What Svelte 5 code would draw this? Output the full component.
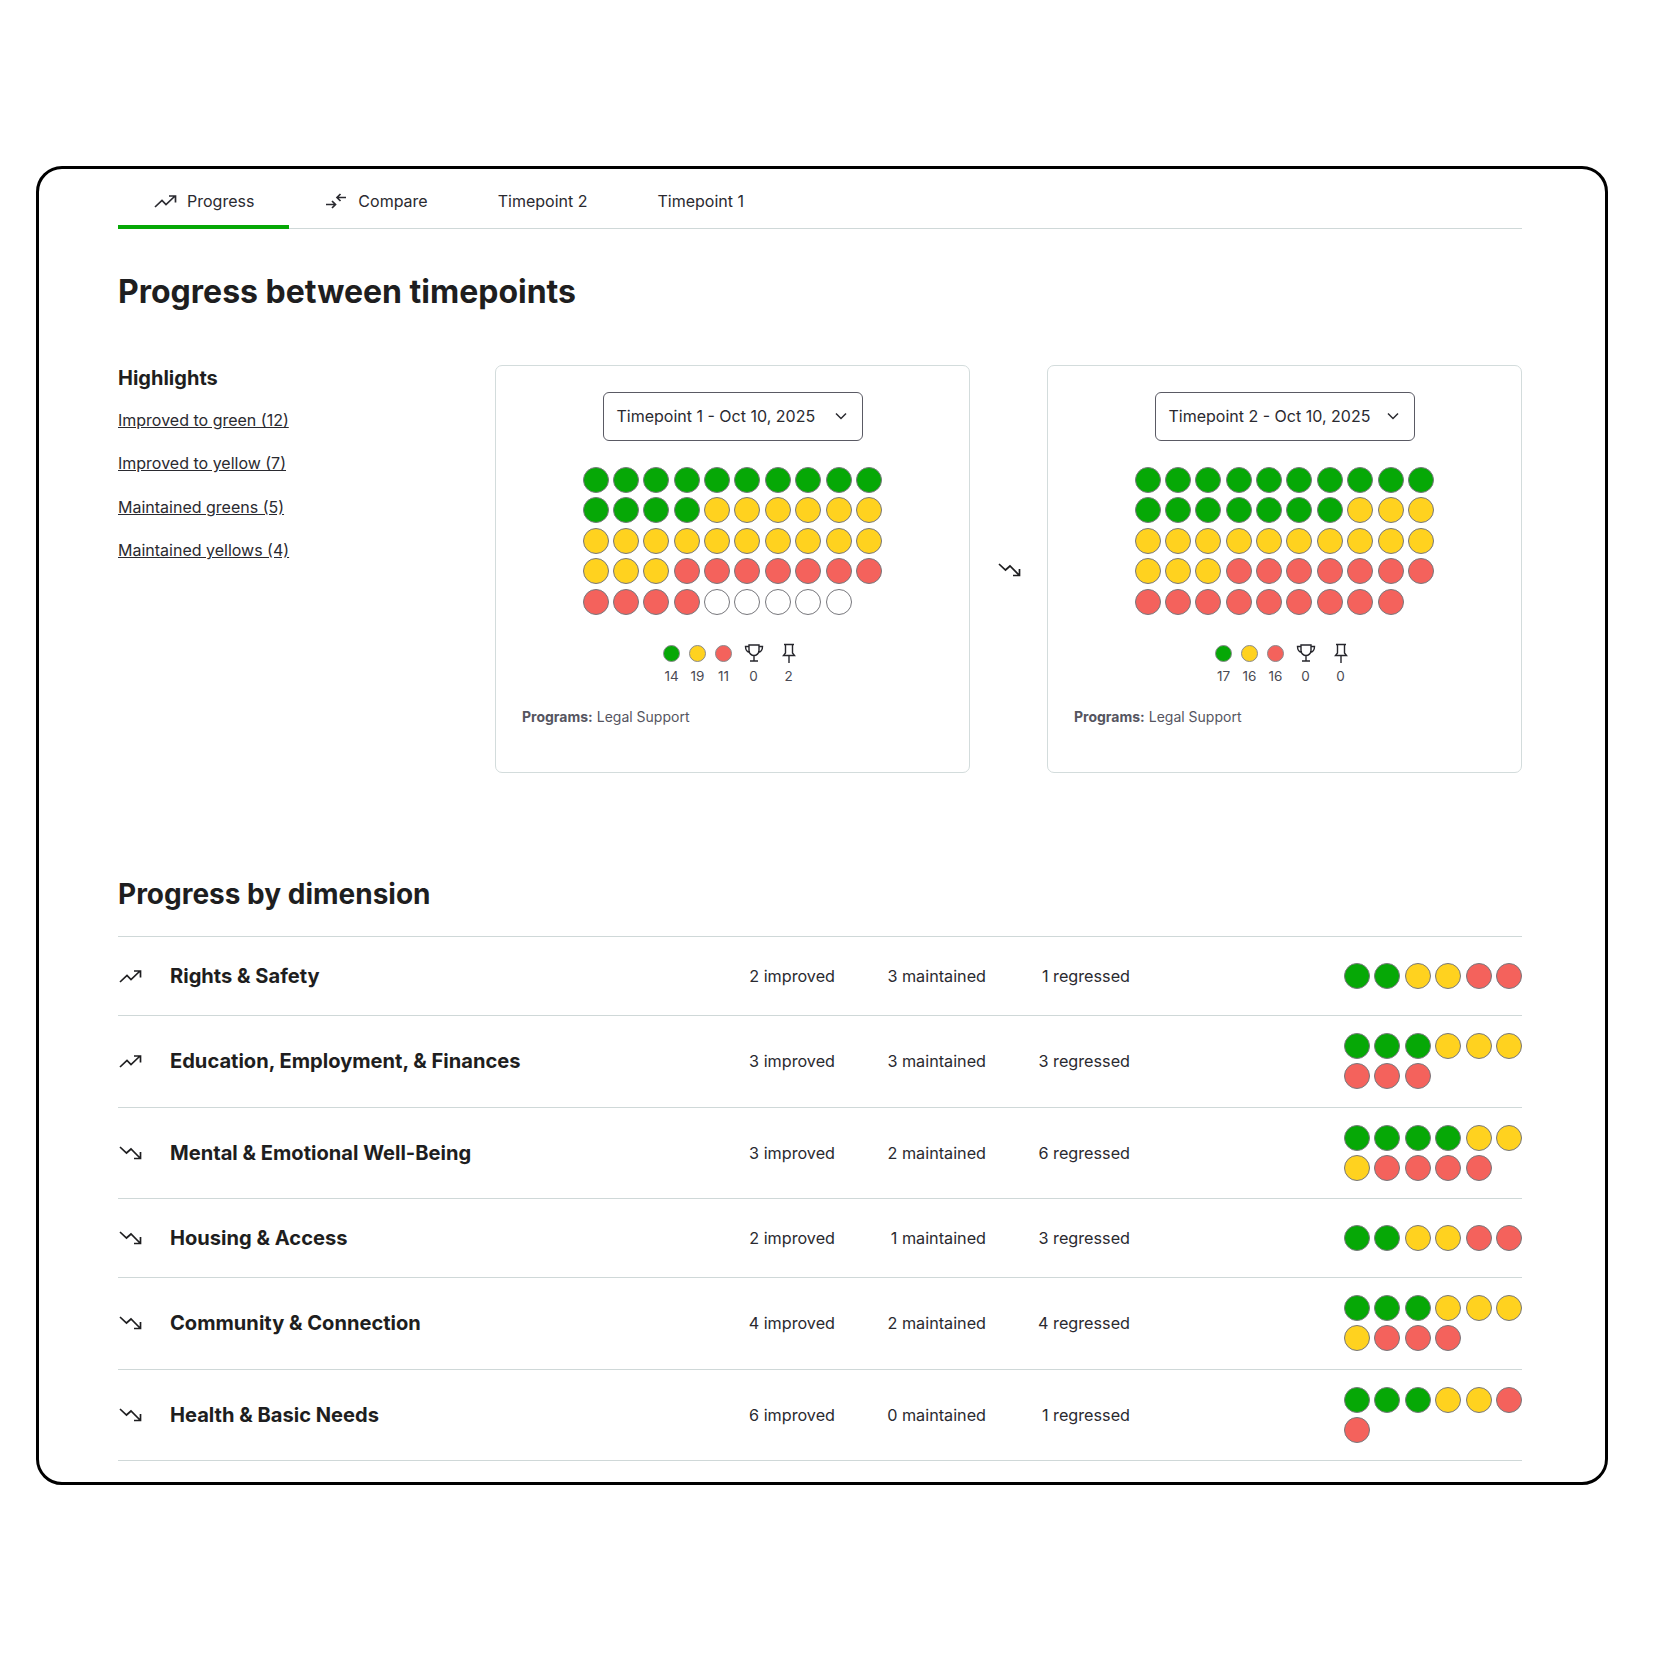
<script lang="ts">
  const g = "g", y = "y", r = "r", e = "e";

  function expand(counts: [string, number][]): string[] {
    return counts.flatMap(([c, n]) => Array(n).fill(c));
  }

  const tabs = ["Progress", "Compare", "Timepoint 2", "Timepoint 1"];
  const highlights = [
    "Improved to green (12)",
    "Improved to yellow (7)",
    "Maintained greens (5)",
    "Maintained yellows (4)",
  ];

  const cards = [
    {
      label: "Timepoint 1 - Oct 10, 2025",
      dots: expand([[g, 14], [y, 19], [r, 11], [e, 5]]),
      counts: [14, 19, 11, 0, 2],
    },
    {
      label: "Timepoint 2 - Oct 10, 2025",
      dots: expand([[g, 17], [y, 16], [r, 16]]),
      counts: [17, 16, 16, 0, 0],
    },
  ];

  const dimensions = [
    { name: "Rights & Safety", up: true, imp: 2, main: 3, reg: 1, dots: expand([[g, 2], [y, 2], [r, 2]]) },
    { name: "Education, Employment, & Finances", up: true, imp: 3, main: 3, reg: 3, dots: expand([[g, 3], [y, 3], [r, 3]]) },
    { name: "Mental & Emotional Well-Being", up: false, imp: 3, main: 2, reg: 6, dots: expand([[g, 4], [y, 3], [r, 4]]) },
    { name: "Housing & Access", up: false, imp: 2, main: 1, reg: 3, dots: expand([[g, 2], [y, 2], [r, 2]]) },
    { name: "Community & Connection", up: false, imp: 4, main: 2, reg: 4, dots: expand([[g, 3], [y, 4], [r, 3]]) },
    { name: "Health & Basic Needs", up: false, imp: 6, main: 0, reg: 1, dots: expand([[g, 3], [y, 2], [r, 2]]) },
  ];
</script>

{#snippet trend(up: boolean)}
  <svg class="trend" viewBox="0 0 24 16" fill="none" stroke="currentColor" stroke-width="1.7">
    {#if up}
      <path d="M2 14 L9 7.5 L13 11.5 L22 3 M16 3 H22.5 V9.5" />
    {:else}
      <path d="M2 2 L8.5 8 L13 4 L22 13 M22.5 7 V13.5 H16" />
    {/if}
  </svg>
{/snippet}

<div class="frame">
  <nav class="tabs">
    {#each tabs as t, i}
      <div class="tab" class:active={i === 0}>
        {#if i === 0}
          {@render trend(true)}
        {:else if i === 1}
          <svg class="trend" viewBox="0 0 24 16" fill="none" stroke="currentColor" stroke-width="1.7">
            <path d="M2 11.5 H11.5 M8 8 L11.5 11.5 L8 15 M22 4.5 H13 M16.5 1 L13 4.5 L16.5 8" />
          </svg>
        {/if}
        <span>{t}</span>
      </div>
    {/each}
  </nav>

  <h1>Progress between timepoints</h1>

  <section class="compare">
    <div class="highlights">
      <h3>Highlights</h3>
      {#each highlights as h}
        <a href="#top">{h}</a>
      {/each}
    </div>

    {#each cards as c, i}
      {#if i === 1}
        <div class="between">{@render trend(false)}</div>
      {/if}
      <div class="card">
        <div class="select">
          <span>{c.label}</span>
          <svg viewBox="0 0 12 8" width="12" height="8" fill="none" stroke="currentColor" stroke-width="1.5">
            <path d="M1 1.5 L6 6.5 L11 1.5" />
          </svg>
        </div>
        <div class="grid">
          {#each c.dots as d}
            <span class="dot {d}"></span>
          {/each}
        </div>
        <div class="legend">
          <div class="col"><span class="mini g"></span><small>{c.counts[0]}</small></div>
          <div class="col"><span class="mini y"></span><small>{c.counts[1]}</small></div>
          <div class="col"><span class="mini r"></span><small>{c.counts[2]}</small></div>
          <div class="col wide">
            <svg viewBox="0 0 20 20" width="20" height="20" fill="none" stroke="#26262c" stroke-width="1.4">
              <path d="M5 2 H15 V7.5 C15 10.5 12.5 12.5 10 12.5 C7.5 12.5 5 10.5 5 7.5 Z M5 3.5 H1.5 C1.5 7 3 9 6 9.5 M15 3.5 H18.5 C18.5 7 17 9 14 9.5 M10 12.5 V17.5 M6 18 H14" />
            </svg>
            <small>{c.counts[3]}</small>
          </div>
          <div class="col wider">
            <svg viewBox="0 0 20 20" width="20" height="20" fill="none" stroke="#26262c" stroke-width="1.4">
              <path d="M5 1.5 H15 M6.5 1.5 V10 L4.5 12.5 H15.5 L13.5 10 V1.5 M10 12.5 V20" />
            </svg>
            <small>{c.counts[4]}</small>
          </div>
        </div>
        <p class="programs"><b>Programs:</b> Legal Support</p>
      </div>
    {/each}
  </section>

  <h2>Progress by dimension</h2>

  <div class="rows">
    {#each dimensions as d}
      <div class="row">
        {@render trend(d.up)}
        <span class="name">{d.name}</span>
        <span class="stat">{d.imp} improved</span>
        <span class="stat">{d.main} maintained</span>
        <span class="stat">{d.reg} regressed</span>
        <div class="dots">
          {#each d.dots as x}
            <span class="dot {x}"></span>
          {/each}
        </div>
      </div>
    {/each}
  </div>
</div>

<style>
  :global(body) {
    margin: 0;
    background: #fff;
  }

  .frame {
    box-sizing: border-box;
    width: 1572px;
    height: 1319px;
    margin: 166px 0 0 36px;
    padding: 0 83px 0 79px;
    border: 3px solid #000;
    border-radius: 26px;
    font-family: Inter, "Open Sans", sans-serif;
    color: #1e1e20;
  }

  .tabs {
    display: flex;
    height: 59px;
    border-bottom: 1px solid #cfd8d8;
  }

  .tab {
    display: flex;
    align-items: center;
    gap: 10px;
    box-sizing: border-box;
    height: 60px;
    margin-bottom: -1px;
    padding: 8px 35px 0;
    border-bottom: 4px solid transparent;
    font-size: 16px;
    color: #2a2a30;
  }

  .tab.active {
    border-bottom-color: #06a806;
  }

  h1 {
    margin: 44px 0 0;
    font-size: 32px;
    line-height: 38px;
    font-weight: 700;
  }

  .compare {
    display: grid;
    grid-template-columns: 377px 475px 77px 475px;
    margin-top: 54px;
  }

  .highlights {
    display: flex;
    flex-direction: column;
    align-items: flex-start;
  }

  h3 {
    margin: 0 0 19px;
    padding-top: 1px;
    font-size: 20px;
    line-height: 24px;
    font-weight: 700;
  }

  .highlights a {
    color: #2a2a30;
    font-size: 16px;
    line-height: 22px;
    margin-bottom: 21.3px;
  }

  .card {
    box-sizing: border-box;
    height: 408px;
    padding: 26px 26px 0;
    border: 1px solid #d3dcdc;
    border-radius: 7px;
    display: flex;
    flex-direction: column;
    align-items: center;
  }

  .select {
    box-sizing: border-box;
    width: 260px;
    height: 49px;
    padding: 0 15px 2px 13px;
    border: 1px solid #5a5a64;
    border-radius: 6px;
    display: flex;
    align-items: center;
    justify-content: space-between;
    font-size: 16px;
    color: #2a2a30;
  }

  .grid {
    width: 300px;
    margin-top: 25.5px;
    display: flex;
    flex-wrap: wrap;
    gap: 4.5px 4.4px;
    align-content: flex-start;
  }

  .dot {
    box-sizing: border-box;
    width: 26px;
    height: 26px;
    border-radius: 50%;
    border: 1px solid #77777c;
  }

  .g { background: #06a806; }
  .y { background: #ffd21f; }
  .r { background: #f4625c; }
  .e { background: #fff; }

  .legend {
    display: flex;
    margin-top: 28.5px;
  }

  .col {
    width: 26px;
    display: flex;
    flex-direction: column;
    align-items: center;
  }

  .col.wide { width: 34px; }
  .col.wider { width: 36px; }

  .mini {
    box-sizing: border-box;
    width: 17px;
    height: 17px;
    margin: 1.5px 0;
    border-radius: 50%;
    border: 1px solid #8a8a8e;
  }

  small {
    margin-top: 4px;
    font-size: 13.5px;
    line-height: 18px;
    color: #4a4a54;
  }

  .programs {
    align-self: flex-start;
    margin: 23px 0 0;
    font-size: 14px;
    line-height: 18px;
    color: #55555f;
  }

  .between {
    display: flex;
    align-items: center;
    justify-content: center;
    height: 409px;
  }

  .trend {
    width: 24px;
    height: 16px;
    flex: none;
  }

  h2 {
    margin: 102px 0 0;
    font-size: 28px;
    line-height: 36px;
    font-weight: 700;
  }

  .rows {
    margin-top: 24px;
    border-top: 1px solid #cfd8d8;
  }

  .row {
    box-sizing: border-box;
    min-height: 79px;
    padding: 17.25px 0;
    border-bottom: 1px solid #cfd8d8;
    display: grid;
    grid-template-columns: 52px 515px 150px 151px 144px 392px;
    align-items: center;
  }

  .name {
    font-size: 20.1px;
    font-weight: 700;
  }

  .stat {
    text-align: right;
    font-size: 16.2px;
    color: #2a2a30;
  }

  .dots {
    justify-self: end;
    width: 178px;
    display: flex;
    flex-wrap: wrap;
    gap: 4px 4.4px;
  }
</style>
